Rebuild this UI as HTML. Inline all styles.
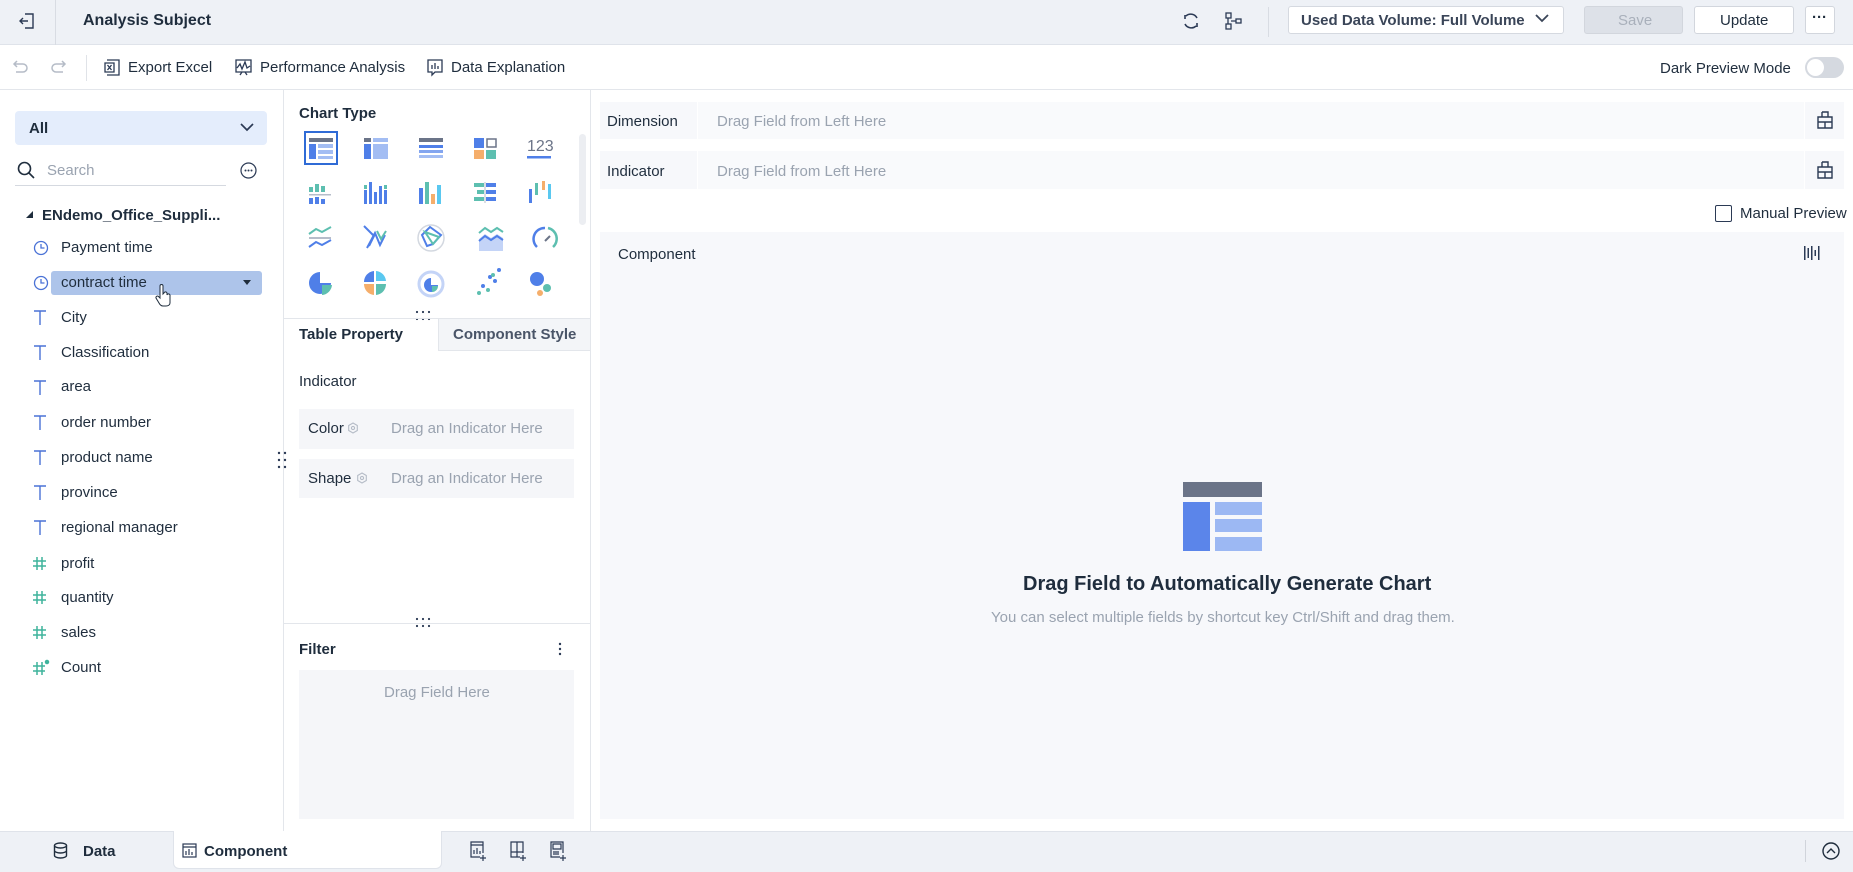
<!DOCTYPE html>
<html><head><meta charset="utf-8"><style>
*{box-sizing:border-box;margin:0;padding:0}
body{width:1853px;height:872px;overflow:hidden;background:#fff;font-family:"Liberation Sans",sans-serif;color:#1f2d3d;position:relative;font-size:15px}
.a{position:absolute}
.t{position:absolute;white-space:nowrap;line-height:1}
.b{font-weight:bold}
.g{color:#9aa3b0}
svg{position:absolute;overflow:visible}
</style></head><body>
<div class="a" style="left:0;top:0;width:1853px;height:45px;background:#eef1f6;border-bottom:1px solid #dfe3ea"></div>
<div class="a" style="left:55px;top:0;width:1px;height:45px;background:#d8dce3"></div>
<svg style="left:18px;top:12px" width="18" height="18" viewBox="0 0 18 18" fill="none" stroke="#2b3a55" stroke-width="1.4"><path d="M7 2h8v14H7M2 9h8M5 6L2 9l3 3"/></svg>
<div class="t b" style="left:83px;top:13px;font-size:16px">Analysis Subject</div>
<svg style="left:1182px;top:12px" width="18" height="18" viewBox="0 0 18 18" fill="none" stroke="#2b3a55" stroke-width="1.6"><path d="M4 4A7 7 0 0 1 15 6M14 14A7 7 0 0 1 3 12M3 3v4M15 15v-4"/></svg>
<svg style="left:1224px;top:12px" width="18" height="18" viewBox="0 0 18 18" fill="none" stroke="#2b3a55" stroke-width="1.3"><rect x="2" y="1" width="5" height="5"/><rect x="2" y="12" width="5" height="5"/><rect x="12" y="7" width="5" height="4"/><path d="M4 6v6M7 9h5"/></svg>
<div class="a" style="left:1268px;top:7px;width:1px;height:30px;background:#d8dce3"></div>
<div class="a" style="left:1288px;top:6px;width:276px;height:28px;background:#fff;border:1px solid #d5d9e0;border-radius:3px"></div>
<div class="t b" style="left:1301px;top:13px;color:#3a4558;font-size:15px">Used Data Volume: Full Volume</div>
<svg style="left:1535px;top:14px" width="14" height="10" viewBox="0 0 14 10" fill="none" stroke="#3a4558" stroke-width="1.8"><path d="M1 1l6 6 6-6"/></svg>
<div class="a" style="left:1584px;top:6px;width:99px;height:28px;background:#dde1e8;border:1px solid #d2d6dd;border-radius:3px"></div>
<div class="t" style="left:1618px;top:13px;color:#a9b0bb">Save</div>
<div class="a" style="left:1694px;top:6px;width:100px;height:28px;background:#fff;border:1px solid #d2d6dd;border-radius:3px"></div>
<div class="t" style="left:1720px;top:13px;color:#1f2d3d">Update</div>
<div class="a" style="left:1805px;top:6px;width:30px;height:28px;background:#fff;border:1px solid #d2d6dd;border-radius:3px"></div>
<div class="t" style="left:1812px;top:10px;font-weight:bold">···</div>
<div class="a" style="left:0;top:89px;width:1853px;height:1px;background:#e3e6eb"></div>
<svg style="left:12px;top:60px" width="16" height="14" viewBox="0 0 16 14" fill="none" stroke="#b5bcc7" stroke-width="1.5"><path d="M2 4h9a4 4 0 0 1 0 8H4M5 1L2 4l3 3"/></svg>
<svg style="left:51px;top:60px" width="16" height="14" viewBox="0 0 16 14" fill="none" stroke="#b5bcc7" stroke-width="1.5"><path d="M14 4H5a4 4 0 0 0 0 8h7M11 1l3 3-3 3"/></svg>
<div class="a" style="left:86px;top:55px;width:1px;height:26px;background:#e0e3e8"></div>
<svg style="left:104px;top:59px" width="16" height="17" viewBox="0 0 16 17" fill="none" stroke="#2b3a55" stroke-width="1.3"><path d="M3 1h12v15H3M1 4h9v9H1zM3.5 6l4 5M7.5 6l-4 5"/></svg>
<div class="t" style="left:128px;top:60px">Export Excel</div>
<svg style="left:235px;top:59px" width="17" height="16" viewBox="0 0 17 16" fill="none" stroke="#2b3a55" stroke-width="1.3"><path d="M1 1h15v12H1zM2 9l3-4 2 5 3-7 2 6 3-2M5 16l2-3M12 16l-2-3"/></svg>
<div class="t" style="left:260px;top:60px">Performance Analysis</div>
<svg style="left:427px;top:59px" width="16" height="17" viewBox="0 0 16 17" fill="none" stroke="#2b3a55" stroke-width="1.3"><path d="M1 1h14v12H8l-3 3v-3H1zM5 10V6M8 10V4M11 10V7"/></svg>
<div class="t" style="left:451px;top:60px">Data Explanation</div>
<div class="t" style="left:1660px;top:61px">Dark Preview Mode</div>
<div class="a" style="left:1805px;top:57px;width:39px;height:21px;border-radius:11px;background:#d5d9e0"></div>
<div class="a" style="left:1807px;top:59px;width:17px;height:17px;border-radius:50%;background:#fff"></div>
<div class="a" style="left:283px;top:90px;width:1px;height:741px;background:#e3e6eb"></div>
<div class="a" style="left:15px;top:111px;width:252px;height:34px;background:#e4edfc;border-radius:4px"></div>
<div class="t b" style="left:29px;top:121px">All</div>
<svg style="left:240px;top:123px" width="14" height="9" viewBox="0 0 14 9" fill="none" stroke="#2b3a55" stroke-width="1.7"><path d="M1 1l6 6 6-6"/></svg>
<svg style="left:17px;top:161px" width="18" height="18" viewBox="0 0 18 18" fill="none" stroke="#1f2d3d" stroke-width="1.6"><circle cx="7.5" cy="7.5" r="6"/><path d="M12 12l5 5"/></svg>
<div class="t g" style="left:47px;top:163px">Search</div>
<div class="a" style="left:15px;top:185px;width:211px;height:1px;background:#d5d9e0"></div>
<svg style="left:240px;top:162px" width="17" height="17" viewBox="0 0 17 17" fill="#2b3a55"><circle cx="8.5" cy="8.5" r="7.5" fill="none" stroke="#2b3a55" stroke-width="1.2"/><circle cx="5.5" cy="8.5" r="1"/><circle cx="8.5" cy="8.5" r="1"/><circle cx="11.5" cy="8.5" r="1"/></svg>
<svg style="left:26px;top:211px" width="7" height="7" viewBox="0 0 7 7"><path d="M7 0V7H0z" fill="#1f2d3d"/></svg>
<div class="t b" style="left:42px;top:208px">ENdemo_Office_Suppli...</div>
<div class="a" style="left:51px;top:271px;width:211px;height:24px;background:#adc4ea;border-radius:3px"></div>
<svg style="left:243px;top:280px" width="8" height="5" viewBox="0 0 8 5"><path d="M0 0h8L4 5z" fill="#1f2d3d"/></svg>
<div class="t" style="left:61px;top:240px">Payment time</div>
<div class="t" style="left:61px;top:275px">contract time</div>
<div class="t" style="left:61px;top:310px">City</div>
<div class="t" style="left:61px;top:345px">Classification</div>
<div class="t" style="left:61px;top:379px">area</div>
<div class="t" style="left:61px;top:415px">order number</div>
<div class="t" style="left:61px;top:450px">product name</div>
<div class="t" style="left:61px;top:485px">province</div>
<div class="t" style="left:61px;top:520px">regional manager</div>
<div class="t" style="left:61px;top:556px">profit</div>
<div class="t" style="left:61px;top:590px">quantity</div>
<div class="t" style="left:61px;top:625px">sales</div>
<div class="t" style="left:61px;top:660px">Count</div>
<svg style="left:33px;top:240px" width="16" height="16" viewBox="0 0 16 16" fill="none" stroke="#4a72d6" stroke-width="1.3"><circle cx="8" cy="8" r="6.5"/><path d="M8 4v4h3.5"/></svg>
<svg style="left:33px;top:275px" width="16" height="16" viewBox="0 0 16 16" fill="none" stroke="#4a72d6" stroke-width="1.3"><circle cx="8" cy="8" r="6.5"/><path d="M8 4v4h3.5"/></svg>
<svg style="left:33px;top:310px" width="14" height="15" viewBox="0 0 14 15" fill="none" stroke="#4a72d6" stroke-width="1.4"><path d="M1 1h12M7 1v14"/></svg>
<svg style="left:33px;top:345px" width="14" height="15" viewBox="0 0 14 15" fill="none" stroke="#4a72d6" stroke-width="1.4"><path d="M1 1h12M7 1v14"/></svg>
<svg style="left:33px;top:380px" width="14" height="15" viewBox="0 0 14 15" fill="none" stroke="#4a72d6" stroke-width="1.4"><path d="M1 1h12M7 1v14"/></svg>
<svg style="left:33px;top:415px" width="14" height="15" viewBox="0 0 14 15" fill="none" stroke="#4a72d6" stroke-width="1.4"><path d="M1 1h12M7 1v14"/></svg>
<svg style="left:33px;top:450px" width="14" height="15" viewBox="0 0 14 15" fill="none" stroke="#4a72d6" stroke-width="1.4"><path d="M1 1h12M7 1v14"/></svg>
<svg style="left:33px;top:485px" width="14" height="15" viewBox="0 0 14 15" fill="none" stroke="#4a72d6" stroke-width="1.4"><path d="M1 1h12M7 1v14"/></svg>
<svg style="left:33px;top:520px" width="14" height="15" viewBox="0 0 14 15" fill="none" stroke="#4a72d6" stroke-width="1.4"><path d="M1 1h12M7 1v14"/></svg>
<svg style="left:32px;top:556px" width="15" height="15" viewBox="0 0 15 15" fill="none" stroke="#3eb39c" stroke-width="1.5"><path d="M5 1v13M10 1v13M1 5h13M1 10h13"/></svg>
<svg style="left:32px;top:590px" width="15" height="15" viewBox="0 0 15 15" fill="none" stroke="#3eb39c" stroke-width="1.5"><path d="M5 1v13M10 1v13M1 5h13M1 10h13"/></svg>
<svg style="left:32px;top:625px" width="15" height="15" viewBox="0 0 15 15" fill="none" stroke="#3eb39c" stroke-width="1.5"><path d="M5 1v13M10 1v13M1 5h13M1 10h13"/></svg>
<svg style="left:32px;top:660px" width="17" height="15" viewBox="0 0 17 15" fill="none" stroke="#3eb39c" stroke-width="1.5"><path d="M5 2v13M10 2v13M1 6h12M1 11h12"/><circle cx="15" cy="2" r="1.5" fill="#3eb39c"/></svg>
<svg style="left:155px;top:284px" width="18" height="22" viewBox="0 0 18 22" fill="#fff" stroke="#1f2d3d" stroke-width="1"><path d="M5 2a1.5 1.5 0 0 1 3 0v8l1-1a1.5 1.5 0 0 1 3 1v1a1.5 1.5 0 0 1 3 1v7c0 2-2 3-4 3H8c-2 0-3-1-4-3l-3-5a1.5 1.5 0 0 1 2.5-1.5L5 14z"/></svg>
<svg style="left:277px;top:451px" width="10" height="18" viewBox="0 0 10 18" fill="#2b3a55"><circle cx="2" cy="2" r="1.2"/><circle cx="8" cy="2" r="1.2"/><circle cx="2" cy="9" r="1.2"/><circle cx="8" cy="9" r="1.2"/><circle cx="2" cy="16" r="1.2"/><circle cx="8" cy="16" r="1.2"/></svg>
<div class="a" style="left:590px;top:90px;width:1px;height:741px;background:#e3e6eb"></div>
<div class="t b" style="left:299px;top:106px">Chart Type</div>
<div class="a" style="left:579px;top:134px;width:7px;height:91px;border-radius:4px;background:#eceef2"></div>
<div class="a" style="left:304px;top:131px;width:34px;height:34px;border:2px solid #2f6bd6"></div>
<svg style="left:304px;top:131px" width="290" height="170" viewBox="0 0 290 170">
<g transform="translate(5,7)"><rect x="0" y="0" width="24" height="4" fill="#6b7488"/><rect x="0" y="6" width="7" height="15" fill="#4f7fe8"/><rect x="9" y="6" width="15" height="4" fill="#a3bdf3"/><rect x="9" y="12" width="15" height="4" fill="#a3bdf3"/><rect x="9" y="18" width="15" height="3" fill="#a3bdf3"/></g>
<g transform="translate(60,7)"><rect x="0" y="0" width="7" height="4" fill="#6b7488"/><rect x="9" y="0" width="15" height="4" fill="#a3bdf3"/><rect x="0" y="6" width="7" height="15" fill="#4f7fe8"/><rect x="9" y="6" width="15" height="15" fill="#a3bdf3"/></g>
<g transform="translate(115,7)"><rect x="0" y="0" width="24" height="4" fill="#6b7488"/><rect x="0" y="7" width="24" height="3" fill="#4f7fe8"/><rect x="0" y="12" width="24" height="3" fill="#4f7fe8" opacity=".7"/><rect x="0" y="17" width="24" height="3" fill="#a3bdf3"/></g>
<g transform="translate(170,7)"><rect x="0" y="0" width="10" height="10" fill="#4f7fe8"/><rect x="13" y="1" width="9" height="8" fill="none" stroke="#6b7488" stroke-width="1.5"/><rect x="0" y="12" width="10" height="9" fill="#f5ae6b"/><rect x="12" y="12" width="10" height="9" fill="#5dbfb0"/></g>
<text x="223" y="20" font-family="Liberation Sans" font-size="16" fill="#6b7488">123</text><rect x="223" y="25" width="24" height="2.5" fill="#4f7fe8"/>
<g transform="translate(5,53)"><rect x="6" y="0" width="4" height="8" fill="#5dbfb0"/><rect x="12" y="2" width="4" height="6" fill="#5dbfb0"/><rect x="0" y="3" width="4" height="5" fill="#5dbfb0"/><rect x="0" y="10" width="22" height="1.5" fill="#b6bdca"/><rect x="0" y="14" width="4" height="6" fill="#4f7fe8"/><rect x="6" y="13" width="4" height="7" fill="#4f7fe8"/><rect x="12" y="15" width="4" height="5" fill="#4f7fe8"/></g>
<g transform="translate(60,51)"><rect x="0" y="8" width="3" height="14" fill="#4f7fe8"/><rect x="0" y="3" width="3" height="4" fill="#5dbfb0"/><rect x="5" y="0" width="3" height="22" fill="#4f7fe8"/><rect x="10" y="10" width="3" height="12" fill="#4f7fe8"/><rect x="15" y="4" width="3" height="18" fill="#4f7fe8"/><rect x="20" y="8" width="3" height="14" fill="#4f7fe8"/><rect x="20" y="3" width="3" height="4" fill="#5dbfb0"/></g>
<g transform="translate(115,51)"><rect x="0" y="6" width="4" height="16" fill="#4f7fe8"/><rect x="6" y="0" width="4" height="22" fill="#5dbfb0"/><rect x="12" y="12" width="4" height="10" fill="#f5ae6b"/><rect x="18" y="3" width="4" height="19" fill="#5ac8f0"/></g>
<g transform="translate(170,52)"><rect x="0" y="0" width="10" height="4" fill="#5dbfb0"/><rect x="12" y="0" width="10" height="4" fill="#4f7fe8"/><rect x="3" y="7" width="7" height="4" fill="#5dbfb0"/><rect x="12" y="7" width="10" height="4" fill="#4f7fe8"/><rect x="0" y="14" width="10" height="4" fill="#5dbfb0"/><rect x="12" y="14" width="10" height="4" fill="#4f7fe8"/><rect x="10.5" y="-1" width="1" height="21" fill="#b6bdca"/></g>
<g transform="translate(225,50)"><rect x="0" y="8" width="3" height="14" fill="#4f7fe8"/><rect x="6" y="2" width="3" height="12" fill="#5dbfb0"/><rect x="13" y="0" width="3" height="9" fill="#f5ae6b"/><rect x="19" y="3" width="3" height="15" fill="#5ac8f0"/></g>
<g fill="none" stroke-width="2"><path d="M5 103l7-5 6 3 9-5" stroke="#5dbfb0"/><rect x="5" y="106" width="22" height="2" fill="#b6bdca" stroke="none"/><path d="M5 116l7-5 6 3 9-5" stroke="#4f7fe8"/>
<path d="M60 95l10 10 -5 10M63 117l8-15 5 12 5-10" stroke="#4f7fe8"/><path d="M73 100l4 8 5-8" stroke="#5dbfb0"/>
<circle cx="127" cy="107" r="13" stroke="#d3d8e0" stroke-width="1.5"/><path d="M118 104l8-8 11 8-8 9-6 2z" stroke="#4f7fe8"/><path d="M121 101l14 5-6 7z" stroke="#5dbfb0"/>
<path d="M175 108l6-5 6 4 6-4 6 4v13h-24z" fill="#c4d4f7" stroke="none"/><path d="M175 102l6-5 6 4 6-4 6 4" stroke="#5dbfb0"/><path d="M175 110l6-5 6 4 6-4 6 4" stroke="#4f7fe8"/>
<path d="M233 116a11 11 0 0 1 8-19" stroke="#4f7fe8" stroke-width="2.5"/><path d="M244 97a11 11 0 0 1 5 19" stroke="#5dbfb0" stroke-width="2.5"/><path d="M241 110l5-5" stroke="#6b7488"/></g>
<g><path d="M27 152a11 11 0 1 1-11-11v11z" fill="#4f7fe8"/><path d="M18 154h10a11 11 0 0 1-10 10z" fill="#5dbfb0"/>
<path d="M70 140a11 11 0 0 0-10 11h10z" fill="#4f7fe8"/><path d="M72 140v10h10a11 11 0 0 0-10-10z" fill="#5ac8f0"/><path d="M60 153a11 11 0 0 0 10 11v-11z" fill="#f5ae6b"/><path d="M72 153v11a11 11 0 0 0 10-11z" fill="#5dbfb0"/>
<circle cx="127" cy="153" r="12" fill="none" stroke="#c4d4f7" stroke-width="3"/><path d="M134 154a7 7 0 1 1-7-7v7z" fill="#4f7fe8"/><path d="M128 155h6a6 6 0 0 1-6 6z" fill="#5dbfb0"/>
<g fill="#4f7fe8"><circle cx="179" cy="155" r="2"/><circle cx="186" cy="146" r="2"/><circle cx="195" cy="139" r="2"/><circle cx="191" cy="150" r="2"/></g><g fill="#5dbfb0"><circle cx="175" cy="162" r="2"/><circle cx="184" cy="159" r="2"/><circle cx="189" cy="144" r="2"/></g>
<circle cx="233" cy="148" r="7" fill="#4f7fe8"/><circle cx="243" cy="157" r="4" fill="#5dbfb0"/><circle cx="236" cy="162" r="3" fill="#f5ae6b"/></g>
</svg>
<svg style="left:415px;top:310px" width="16" height="12" viewBox="0 0 16 12" fill="#2b3a55"><circle cx="2" cy="2" r="1.1"/><circle cx="8" cy="2" r="1.1"/><circle cx="14" cy="2" r="1.1"/><circle cx="2" cy="9" r="1.1"/><circle cx="8" cy="9" r="1.1"/><circle cx="14" cy="9" r="1.1"/></svg>
<div class="a" style="left:284px;top:318px;width:306px;height:1px;background:#e3e6eb"></div>
<div class="a" style="left:438px;top:319px;width:152px;height:32px;background:#f3f5f8;border-left:1px solid #e3e6eb;border-bottom:1px solid #e3e6eb"></div>
<div class="t b" style="left:299px;top:327px">Table Property</div>
<div class="t b" style="left:453px;top:327px;color:#4a5568">Component Style</div>
<div class="t" style="left:299px;top:374px">Indicator</div>
<div class="a" style="left:299px;top:409px;width:275px;height:40px;background:#f5f6f9"></div>
<div class="t" style="left:308px;top:421px">Color</div>
<svg style="left:347px;top:422px" width="12" height="12" viewBox="0 0 12 12" fill="none" stroke="#b5bcc7" stroke-width="1.1"><path d="M6 1l4.3 2.5v5L6 11 1.7 8.5v-5z"/><circle cx="6" cy="6" r="1.6"/></svg>
<div class="t g" style="left:391px;top:421px">Drag an Indicator Here</div>
<div class="a" style="left:299px;top:459px;width:275px;height:39px;background:#f5f6f9"></div>
<div class="t" style="left:308px;top:471px">Shape</div>
<svg style="left:356px;top:472px" width="12" height="12" viewBox="0 0 12 12" fill="none" stroke="#b5bcc7" stroke-width="1.1"><path d="M6 1l4.3 2.5v5L6 11 1.7 8.5v-5z"/><circle cx="6" cy="6" r="1.6"/></svg>
<div class="t g" style="left:391px;top:471px">Drag an Indicator Here</div>
<div class="a" style="left:284px;top:623px;width:306px;height:1px;background:#e3e6eb"></div>
<svg style="left:415px;top:617px" width="16" height="12" viewBox="0 0 16 12" fill="#2b3a55"><circle cx="2" cy="2" r="1.1"/><circle cx="8" cy="2" r="1.1"/><circle cx="14" cy="2" r="1.1"/><circle cx="2" cy="9" r="1.1"/><circle cx="8" cy="9" r="1.1"/><circle cx="14" cy="9" r="1.1"/></svg>
<div class="t b" style="left:299px;top:642px">Filter</div>
<svg style="left:558px;top:642px" width="4" height="14" viewBox="0 0 4 14" fill="#2b3a55"><circle cx="2" cy="2" r="1.2"/><circle cx="2" cy="7" r="1.2"/><circle cx="2" cy="12" r="1.2"/></svg>
<div class="a" style="left:299px;top:670px;width:275px;height:149px;background:#f5f6f9"></div>
<div class="t g" style="left:384px;top:685px">Drag Field Here</div>
<div class="a" style="left:600px;top:102px;width:1244px;height:37px;background:#f7f8fb"></div>
<div class="a" style="left:697px;top:102px;width:1108px;height:37px;background:#f9fafc;border-left:1px solid #fff;border-right:1px solid #fff"></div>
<div class="t" style="left:607px;top:114px">Dimension</div>
<div class="t g" style="left:717px;top:114px">Drag Field from Left Here</div>
<div class="a" style="left:600px;top:151px;width:1244px;height:38px;background:#f7f8fb"></div>
<div class="a" style="left:697px;top:151px;width:1108px;height:38px;background:#f9fafc;border-left:1px solid #fff;border-right:1px solid #fff"></div>
<div class="t" style="left:607px;top:164px">Indicator</div>
<div class="t g" style="left:717px;top:164px">Drag Field from Left Here</div>
<svg style="left:1817px;top:111px" width="16" height="18" viewBox="0 0 16 18" fill="none" stroke="#2b3a55" stroke-width="1.4"><path d="M5 1h6v5M5 1v5M1 6h14v11H1zM1 11h14M8 11v6"/></svg>
<svg style="left:1817px;top:161px" width="16" height="18" viewBox="0 0 16 18" fill="none" stroke="#2b3a55" stroke-width="1.4"><path d="M5 1h6v5M5 1v5M1 6h14v11H1zM1 11h14M8 11v6"/></svg>
<div class="a" style="left:1715px;top:205px;width:17px;height:17px;border:1.5px solid #2b3a55;border-radius:2px"></div>
<div class="t" style="left:1740px;top:206px">Manual Preview</div>
<div class="a" style="left:600px;top:232px;width:1244px;height:587px;background:#f7f8fb"></div>
<div class="t" style="left:618px;top:247px">Component</div>
<svg style="left:1803px;top:245px" width="18" height="16" viewBox="0 0 18 16" fill="#2b3a55"><rect x="1" y="1" width="1.5" height="14"/><rect x="4.5" y="3" width="1.5" height="10"/><rect x="8" y="1" width="1.5" height="14"/><rect x="11.5" y="5" width="1.5" height="6"/><rect x="15" y="1" width="1.5" height="14"/></svg>
<svg style="left:1183px;top:482px" width="80" height="70" viewBox="0 0 80 70"><rect x="0" y="0" width="79" height="15" fill="#6b7488"/><rect x="0" y="20" width="27" height="49" fill="#5b85ea"/><rect x="32" y="20" width="47" height="13" fill="#9cb8f3"/><rect x="32" y="37" width="47" height="13" fill="#9cb8f3"/><rect x="32" y="55" width="47" height="14" fill="#9cb8f3"/></svg>
<div class="t b" style="left:1023px;top:574px;font-size:20px;color:#1f2d3d">Drag Field to Automatically Generate Chart</div>
<div class="t g" style="left:991px;top:610px;font-size:15px">You can select multiple fields by shortcut key Ctrl/Shift and drag them.</div>
<div class="a" style="left:0;top:831px;width:1853px;height:41px;background:#eef1f6;border-top:1px solid #dfe3ea"></div>
<div class="a" style="left:173px;top:831px;width:269px;height:38px;background:#fff;border:1px solid #dfe3ea;border-top:none;border-radius:0 0 6px 6px"></div>
<svg style="left:53px;top:842px" width="15" height="17" viewBox="0 0 15 17" fill="none" stroke="#1f2d3d" stroke-width="1.4"><ellipse cx="7.5" cy="3.5" rx="6" ry="2.5"/><path d="M1.5 3.5v10c0 1.4 2.7 2.5 6 2.5s6-1.1 6-2.5v-10M1.5 8.5c0 1.4 2.7 2.5 6 2.5s6-1.1 6-2.5"/></svg>
<div class="t b" style="left:83px;top:844px">Data</div>
<svg style="left:182px;top:843px" width="15" height="15" viewBox="0 0 15 15" fill="none" stroke="#2b3a55" stroke-width="1.2"><rect x="1" y="1" width="13" height="13"/><path d="M1 4h13M4 12V8M7 12V6M10 12V9"/></svg>
<div class="t b" style="left:204px;top:844px">Component</div>
<svg style="left:470px;top:841px" width="18" height="20" viewBox="0 0 18 20" fill="none" stroke="#2b3a55" stroke-width="1.2"><path d="M13 12V1H1v15h9M1 4h12M4 13V9M7 13V7M10 13V10M13 14v6M10 17h6"/></svg>
<svg style="left:510px;top:841px" width="18" height="20" viewBox="0 0 18 20" fill="none" stroke="#2b3a55" stroke-width="1.2"><path d="M13 12V1H1v15h9M7 1v15M1 11h12M13 14v6M10 17h6"/></svg>
<svg style="left:550px;top:841px" width="18" height="20" viewBox="0 0 18 20" fill="none" stroke="#2b3a55" stroke-width="1.2"><path d="M13 12V1H1v15h9M3 3h8v5H3zM3 11h6M3 13h6M13 14v6M10 17h6"/></svg>
<div class="a" style="left:1805px;top:840px;width:1px;height:22px;background:#d0d4db"></div>
<svg style="left:1822px;top:842px" width="18" height="18" viewBox="0 0 18 18" fill="none" stroke="#1f2d3d" stroke-width="1.4"><circle cx="9" cy="9" r="8"/><path d="M5 11l4-4 4 4"/></svg>
</body></html>
